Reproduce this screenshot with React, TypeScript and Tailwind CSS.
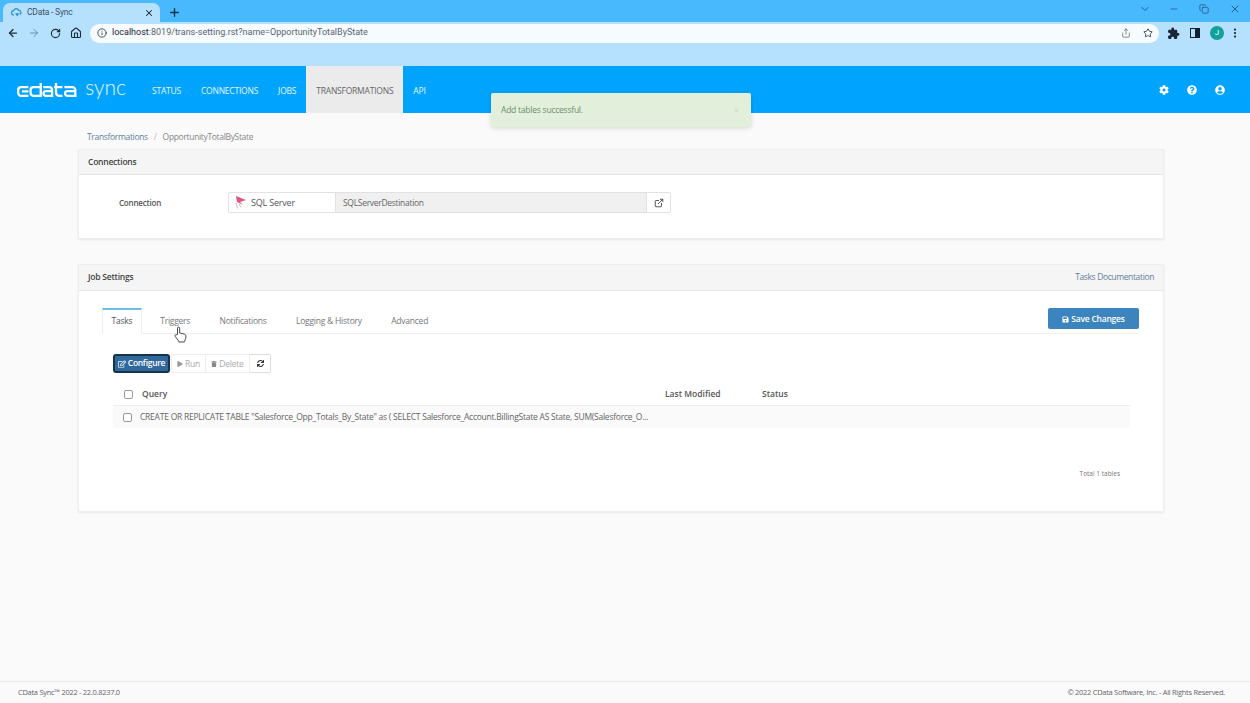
import React from "react";
import {
  ArrowLeft,
  ArrowRight,
  RotateCw,
  Home,
  Info,
  Share,
  Star,
  ChevronDown,
  Minus,
  X,
  Plus,
  Copy,
  MoreVertical,
  ExternalLink,
} from "lucide-react";
import {
  FaCog,
  FaQuestionCircle,
  FaUserCircle,
  FaPlay,
  FaTrash,
  FaSync,
  FaRegEdit,
  FaSave,
} from "react-icons/fa";
import { MdExtension } from "react-icons/md";

const navItems = ["STATUS", "CONNECTIONS", "JOBS", "TRANSFORMATIONS", "API"];
const tabs = ["Tasks", "Triggers", "Notifications", "Logging & History", "Advanced"];

const Logo = () => (
  <svg width="62" height="16" viewBox="0 0 62 16" fill="none">
    <g stroke="#fff" strokeWidth="2.300">
      <path d="M11.500 5.100H4.200a3 3 0 0 0-3 3v2.800a3 3 0 0 0 3 3h7.300M11.500 9.500H5" />
      <path d="M24 1v12.900h-7.300a3 3 0 0 1-3-3V8.100a3 3 0 0 1 3-3H24" />
      <path d="M26.500 5.100h6a3 3 0 0 1 3 3v5.800h-6.300a2.400 2.400 0 0 1 0-4.800h6.300" />
      <path d="M39.500 1v9.900a3 3 0 0 0 3 3h3.500M37.500 5.100H46" />
      <path d="M48 5.100h8a3 3 0 0 1 3 3v5.800h-8a2.400 2.400 0 0 1 0-4.800h8" />
    </g>
  </svg>
);

const App = () => {
  return (
    <div className="relative flex h-[703px] w-[1250px] flex-col overflow-hidden bg-[#fafafa] font-['Open_Sans',sans-serif] text-[#555]">
      {/* browser chrome */}
      <div className="flex h-[22px] items-end bg-[#48b9fd] pl-[3px]">
        <div className="flex h-[19px] w-[157px] items-center rounded-t-[7px] bg-[#b6e1fe] pl-[8px] pr-[6px]">
          <svg width="11" height="11" viewBox="0 0 15 14" fill="none" className="mr-[5px] shrink-0">
            <path d="M4 10.500a3 3 0 0 1-.5-6C4.500 1.500 9 1 10.500 4a3 3 0 0 1 1.500 5.500" stroke="#3f97cc" strokeWidth="2" />
            <path d="M5.500 8h6l-3 4.500z" fill="#2b8fd0" />
          </svg>
          <span className="flex-1 font-['Roboto',sans-serif] text-[8.500px] tracking-[-0.2px] text-[#3a5266]">CData - Sync</span>
          <X size={10} strokeWidth={2.500} className="text-[#222]" />
        </div>
        <Plus size={13} strokeWidth={2.500} className="mb-[3px] ml-[8px] text-[#10324d]" />
        <div className="flex-1" />
        <div className="mb-[7px] flex items-center text-[#2a5c8c]">
          <ChevronDown size={12} className="mr-[18px]" />
          <Minus size={10} className="mr-[20px]" />
          <Copy size={10} className="mr-[20px]" />
          <X size={12} className="mr-[9px]" />
        </div>
      </div>
      <div className="h-[44px] bg-[#b6e1fe]">
        <div className="flex h-[22px] items-center">
          <div className="flex w-[90px] items-center pl-[7px] text-[#1f2d3a]">
            <ArrowLeft size={12} strokeWidth={2.500} />
            <ArrowRight size={12} strokeWidth={2} className="ml-[9px] text-[#6f8fa8]" />
            <RotateCw size={11} strokeWidth={2.500} className="ml-[10px]" />
            <Home size={12} strokeWidth={2.200} className="ml-[9px]" />
          </div>
          <div className="flex h-[19px] w-[1069px] items-center rounded-full bg-[#f6fbff] pl-[7px] pr-[6px]">
            <Info size={10} className="mr-[5px] text-[#333]" />
            <span className="flex-1 font-['Roboto',sans-serif] text-[9px] text-[#5b6670]">
              <span className="text-[#1c2733]">localhost</span>:8019/trans-setting.rst?name=OpportunityTotalByState
            </span>
            <Share size={10} className="mr-[12px] text-[#6b7680]" />
            <Star size={10} className="text-[#333]" />
          </div>
          <MdExtension size={13} className="ml-[8px] text-[#1c2733]" />
          <div className="ml-[10px] flex h-[10px] w-[10px] justify-end border-[1.500px] border-[#10202e]">
            <div className="h-full w-[4px] bg-[#10202e]" />
          </div>
          <div className="ml-[10px] flex h-[14px] w-[14px] items-center justify-center rounded-full bg-[#12a09a] font-['Roboto',sans-serif] text-[8px] text-white">
            J
          </div>
          <MoreVertical size={12} strokeWidth={2.500} className="ml-[5px] text-[#1c2733]" />
        </div>
      </div>

      {/* app nav */}
      <div className="flex h-[47px] items-center bg-[#00a4fe] pr-[6px]">
        <div className="flex h-full flex-1 items-center">
          <div className="ml-[17px] mr-[16px] flex w-[109px] items-center">
            <Logo />
            <span className="ml-[7px] mt-[-6px] font-['Lato',sans-serif] text-[21px] font-light leading-none text-[#e6f5ff]">sync</span>
          </div>
          {navItems.map((item) => (
            <div
              key={item}
              className={
                item === "TRANSFORMATIONS"
                  ? "flex h-full items-center bg-[#ebebeb] px-[10px] pt-[3px] text-[8.500px] tracking-[-0.22px] text-[#666]"
                  : "flex h-full items-center px-[10px] pt-[3px] text-[8.500px] tracking-[-0.22px] text-[#e6f5ff]"
              }
            >
              {item}
            </div>
          ))}
          <div className="flex-1" />
          <FaCog size={10} className="text-white" />
          <FaQuestionCircle size={10} className="ml-[18px] text-white" />
          <FaUserCircle size={10} className="ml-[18px] mr-[19px] text-white" />
        </div>
      </div>

      {/* page */}
      <div className="flex flex-1 flex-col px-[78px] pr-[86px] text-[8.500px] tracking-[-0.23px]">
        <div className="flex h-[36px] items-center pl-[9px] pt-[12px] tracking-[-0.33px] text-[#888]">
          <span className="text-[#64809c]">Transformations</span>
          <span className="mx-[6px] text-[#bbb]">/</span>
          <span>OpportunityTotalByState</span>
        </div>

        <div className="h-[90px] border border-[#eee] bg-white shadow-[0_1px_2px_rgba(0,0,0,0.08)]">
          <div className="flex h-[25px] items-center border-b border-[#e5e5e5] bg-[#f5f5f5] pl-[9px] font-semibold text-[#444]">
            Connections
          </div>
          <div className="flex items-center pt-[17px]">
            <div className="w-[149px] pl-[40px] pt-px text-[8px] font-semibold tracking-[-0.2px] text-[#555]">Connection</div>
            <div className="flex h-[21px] w-[443px] rounded-[2px] border border-[#e2e2e2]">
              <div className="flex w-[106px] items-center pl-[5px] text-[9px] tracking-[-0.2px] text-[#555]">
                <svg width="13" height="15" viewBox="0 0 13 15" className="mr-[4px]">
                  <path d="M2 1l10 4-6 2 3 3-6-3-1-6z" fill="#e0557a" />
                  <path d="M2 8l1.500 5.500M5 9l2 3.500" stroke="#c9a5b0" strokeWidth="0.800" />
                </svg>
                SQL Server
              </div>
              <div className="flex flex-1 items-center border-l border-[#e2e2e2] bg-[#f0f0f0] pl-[7px] pt-px tracking-[-0.3px] text-[#666]">
                SQLServerDestination
              </div>
              <div className="flex w-[24px] items-center justify-center border-l border-[#e2e2e2]">
                <ExternalLink size={10} strokeWidth={2} className="text-[#333]" />
              </div>
            </div>
          </div>
        </div>

        <div className="mt-[25px] h-[248px] border border-[#eee] bg-white shadow-[0_1px_2px_rgba(0,0,0,0.08)]">
          <div className="flex h-[26px] items-center justify-between border-b border-[#e5e5e5] bg-[#f5f5f5] px-[9px]">
            <span className="font-semibold text-[#444]">Job Settings</span>
            <span className="tracking-[-0.37px] text-[#64809c]">Tasks Documentation</span>
          </div>

          <div className="ml-[23px] mr-[25px] mt-[17px] flex h-[26px] items-start border-b border-[#eee]">
            {tabs.map((tab) => (
              <div
                key={tab}
                className={
                  tab === "Tasks"
                    ? "mr-[3.500px] flex h-[26px] w-[40px] items-center justify-center border-x border-b border-t-2 border-[#eee] border-t-[#6bbfe8] border-b-white bg-white text-[#555]"
                    : "flex h-[26px] items-center px-[14.700px] text-[#777]"
                }
              >
                {tab}
              </div>
            ))}
            <div className="flex-1" />
            <div className="-mr-px flex h-[21px] w-[91px] items-center justify-center gap-[2px] rounded-[2px] bg-[#3c84bd] pt-px font-semibold text-white">
              <FaSave size={7} />
              Save Changes
            </div>
          </div>

          <div className="ml-[34px] mt-[20px] flex items-center">
            <div className="flex h-[19px] w-[57px] items-center justify-center gap-[2px] rounded-[3px] border-2 border-[#17324d] bg-[#31689c] font-semibold tracking-[-0.3px] text-white">
              <FaRegEdit size={8} />
              Configure
            </div>
            <div className="ml-px flex h-[19px] w-[35px] items-center justify-center gap-[2px] border border-[#eee] pt-px text-[#aaa]">
              <FaPlay size={6} className="text-[#999]" />
              Run
            </div>
            <div className="flex h-[19px] w-[44px] items-center justify-center gap-[2px] border-y border-r border-[#eee] pt-px text-[#aaa]">
              <FaTrash size={6} className="text-[#888]" />
              Delete
            </div>
            <div className="flex h-[19px] w-[21px] items-center justify-center rounded-r-[2px] border-y border-r border-[#ddd]">
              <FaSync size={7} className="text-[#333]" />
            </div>
          </div>

          <div className="ml-[34px] mr-[33px] mt-[11px] flex h-[22px] items-center border-b border-[#eee] pb-px font-semibold tracking-normal text-[#555]">
            <div className="ml-[11px] h-[9px] w-[9px] rounded-[2px] border border-[#999] bg-white" />
            <div className="ml-[9px] w-[523px]">Query</div>
            <div className="w-[97px]">Last Modified</div>
            <div>Status</div>
          </div>
          <div className="ml-[34px] mr-[33px] flex h-[22px] items-center bg-[#fafafa] tracking-[-0.24px] text-[#666]">
            <div className="ml-[10px] h-[9px] w-[9px] rounded-[2px] border border-[#999] bg-white" />
            <div className="ml-[8px] whitespace-nowrap pt-px">
              CREATE OR REPLICATE TABLE "Salesforce_Opp_Totals_By_State" as ( SELECT Salesforce_Account.BillingState AS State, SUM(Salesforce_O...
            </div>
          </div>

          <div className="mr-[43px] mt-[41px] text-right text-[6.500px] tracking-normal text-[#777]">Total 1 tables</div>
        </div>
      </div>

      {/* footer */}
      <div className="flex h-[22px] items-center justify-between border-t border-[#e8e8e8] bg-[#fafafa] pl-[18px] pr-[25px] text-[7.500px] tracking-[-0.29px] text-[#666]">
        <span>CData Sync™ 2022 - 22.0.8237.0</span>
        <span>© 2022 CData Software, Inc. - All Rights Reserved.</span>
      </div>

      {/* toast */}
      <div className="absolute left-[491px] top-[93px] flex h-[34px] w-[260px] items-center justify-between rounded-[2px] bg-[#e2efda] pl-[10px] pr-[11px] text-[8.500px] tracking-[-0.23px] text-[#6b8f6b] shadow-[0_1px_5px_rgba(0,0,0,0.15)]">
        Add tables successful.
        <X size={7} className="text-[#b8c9b8]" />
      </div>

      {/* mouse pointer */}
      <svg width="13" height="17" viewBox="0 0 13 17" className="absolute left-[174px] top-[326px]">
        <path
          d="M3.500 8V2.200a1.100 1.100 0 0 1 2.200 0V7l4.300 1c1.200.3 1.900 1 1.900 2.200 0 1.500-.3 3-1 4.300-.3.6-.5 1-.5 1.500H5c-.2-1-1-1.800-2-3.200L1.200 10.300c-.7-1.200.7-2.300 1.700-1.300z"
          fill="#fff"
          stroke="#333"
          strokeWidth="0.900"
        />
      </svg>
    </div>
  );
};

export default App;
